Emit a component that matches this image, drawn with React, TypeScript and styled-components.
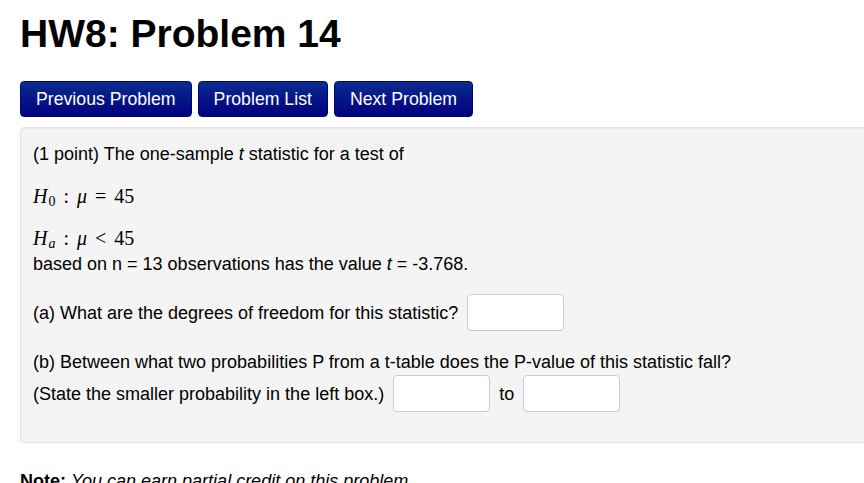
import React from "react";
import styled, { createGlobalStyle } from "styled-components";

const GlobalStyle = createGlobalStyle`
  html, body {
    margin: 0;
    padding: 0;
    background: #fff;
    color: #000;
    font-family: "Liberation Sans", Arial, sans-serif;
    overflow: hidden;
  }
`;

const Page = styled.div`
  padding: 0 0 0 20px;
  width: 864px;
  height: 483px;
  box-sizing: border-box;
`;

const Title = styled.h1`
  margin: 0;
  padding-top: 13px;
  font-size: 39px;
  line-height: 42px;
  font-weight: bold;
`;

const Nav = styled.div`
  display: flex;
  gap: 6px;
  margin-top: 26px;
`;

const NavButton = styled.button`
  height: 36px;
  padding: 0 15px;
  border: 1px solid #00066e;
  border-radius: 4px;
  background: linear-gradient(#0b2c8f, #000080);
  color: #fff;
  font-family: "Liberation Sans", Arial, sans-serif;
  font-size: 17.7px;
  cursor: pointer;
`;

const ProblemBox = styled.div`
  margin-top: 10px;
  margin-right: -12px;
  padding: 16px 12px 30px 12px;
  background: #f4f4f4;
  border: 1px solid #e3e3e3;
  border-radius: 4px;
  box-shadow: inset 0 1px 1px rgba(0, 0, 0, 0.05);
  font-size: 18px;
`;

const Para = styled.p<{ gap?: number }>`
  margin: 0;
  margin-top: ${({ gap }) => gap ?? 0}px;
  line-height: 20px;
  display: flex;
  align-items: center;
  gap: 9px;
`;

const MathLine = styled.div<{ gap?: number }>`
  margin-top: ${({ gap }) => gap ?? 0}px;
  font-family: "Liberation Serif", "Times New Roman", serif;
  font-size: 20px;
  line-height: 22px;
`;

const Var = styled.i`
  font-style: italic;
`;

const Sub = styled.sub`
  font-size: 14px;
  vertical-align: -3px;
  padding-left: 1px;
`;

const Op = styled.span`
  padding: 0 8px;
`;

const Answer = styled.input`
  width: 97px;
  height: 37px;
  box-sizing: border-box;
  border: 1px solid #ccc;
  border-radius: 4px;
  background: #fff;
  margin: 0;
`;

const Note = styled.div`
  margin-top: 28px;
  font-size: 18px;
`;

export default function App() {
  return (
    <Page>
      <GlobalStyle />
      <Title>HW8: Problem 14</Title>
      <Nav>
        <NavButton>Previous Problem</NavButton>
        <NavButton>Problem List</NavButton>
        <NavButton>Next Problem</NavButton>
      </Nav>
      <ProblemBox>
        <Para>
          <span>
            (1 point) The one-sample <Var>t</Var> statistic for a test of
          </span>
        </Para>
        <MathLine gap={21}>
          <Var>H</Var>
          <Sub>0</Sub>
          <Op>:</Op>
          <Var>μ</Var>
          <Op>=</Op>45
        </MathLine>
        <MathLine gap={14}>
          <Var>H</Var>
          <Sub>
            <Var>a</Var>
          </Sub>
          <Op>:</Op>
          <Var>μ</Var>
          <Op>&lt;</Op>45
        </MathLine>
        <Para gap={-1}>
          <span>
            based on n = 13 observations has the value <Var>t</Var> = -3.768.
          </span>
        </Para>
        <Para gap={20}>
          <span>(a) What are the degrees of freedom for this statistic?</span>
          <Answer type="text" />
        </Para>
        <Para gap={21}>
          <span>
            (b) Between what two probabilities P from a t-table does the
            P-value of this statistic fall?
          </span>
        </Para>
        <Para gap={3}>
          <span>(State the smaller probability in the left box.)</span>
          <Answer type="text" />
          <span>to</span>
          <Answer type="text" />
        </Para>
      </ProblemBox>
      <Note>
        <b>Note:</b> <i>You can earn partial credit on this problem.</i>
      </Note>
    </Page>
  );
}
